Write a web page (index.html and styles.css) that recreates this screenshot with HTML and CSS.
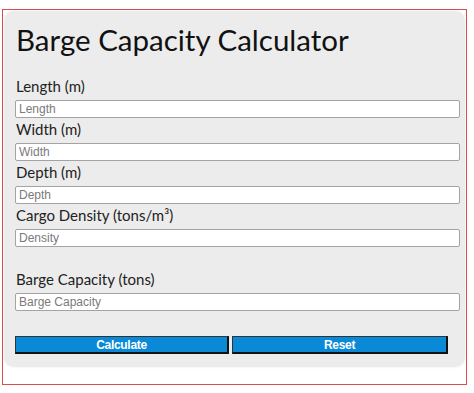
FILE: index.html
```html
<!DOCTYPE html>
<html>

<head>
    <title>
        Barge Capacity Calculator
    </title>

    <link rel="stylesheet" href="styles.css">
</head>

<body>
    <div class="frame">
        <div class="calc">
            <h1>Barge Capacity Calculator</h1>

            <label for="length">Length (m)</label>
            <input type="text" id="length" placeholder="Length">

            <label for="width">Width (m)</label>
            <input type="text" id="width" placeholder="Width">

            <label for="depth">Depth (m)</label>
            <input type="text" id="depth" placeholder="Depth">

            <label for="density">Cargo Density (tons/m³)</label>
            <input type="text" id="density" placeholder="Density">

            <label class="result" for="capacity">Barge Capacity (tons)</label>
            <input type="text" id="capacity" placeholder="Barge Capacity" readonly>

            <div class="buttons">
                <button class="calc-btn">Calculate</button>
                <button class="reset-btn">Reset</button>
            </div>
        </div>
    </div>
</body>

</html>
```

FILE: styles.css
```css
body {
    margin: 0;
    background-color: white;
    font-family: Lato, "Open Sans", sans-serif;
}

.frame {
    width: 465px;
    box-sizing: border-box;
    margin: 9px 0 0 2px;
    padding: 1px;
    border: 1px solid #dd4b4b;
}

.calc {
    background-color: #ececec;
    border-radius: 10px;
    padding: 9px 5px 13px 11px;
    margin-bottom: 16px;
    box-shadow: 0 0 3px rgba(0, 0, 0, 0.08);
}

h1 {
    margin: 0 0 16px 1px;
    font-size: 29.5px;
    font-weight: normal;
    line-height: 40px;
    color: #111;
}

label {
    display: block;
    margin: 1px 0 0 1px;
    font-size: 15px;
    line-height: 20px;
    color: #222;
}

label.result {
    margin-top: 22px;
}

input[type=text] {
    display: block;
    width: 100%;
    height: 18px;
    box-sizing: border-box;
    margin-top: 4px;
    padding: 0 3px;
    border: 1px solid #a3a3a3;
    border-radius: 2px;
    background-color: white;
    font-family: "Liberation Sans", Arial, sans-serif;
    font-size: 12px;
}

input::placeholder {
    color: #7a7a7a;
}

.buttons {
    display: flex;
    gap: 3px;
    margin-top: 25px;
}

.buttons button {
    height: 18px;
    padding: 0;
    background-color: #0a8ad6;
    color: white;
    font-family: "Liberation Sans", Arial, sans-serif;
    font-size: 12px;
    font-weight: bold;
    letter-spacing: -0.3px;
    border-style: solid;
    border-width: 1px 2px 2px 1px;
    border-color: #333 #111 #111 #333;
}

.calc-btn {
    width: 214px;
}

.reset-btn {
    width: 216px;
}
```
